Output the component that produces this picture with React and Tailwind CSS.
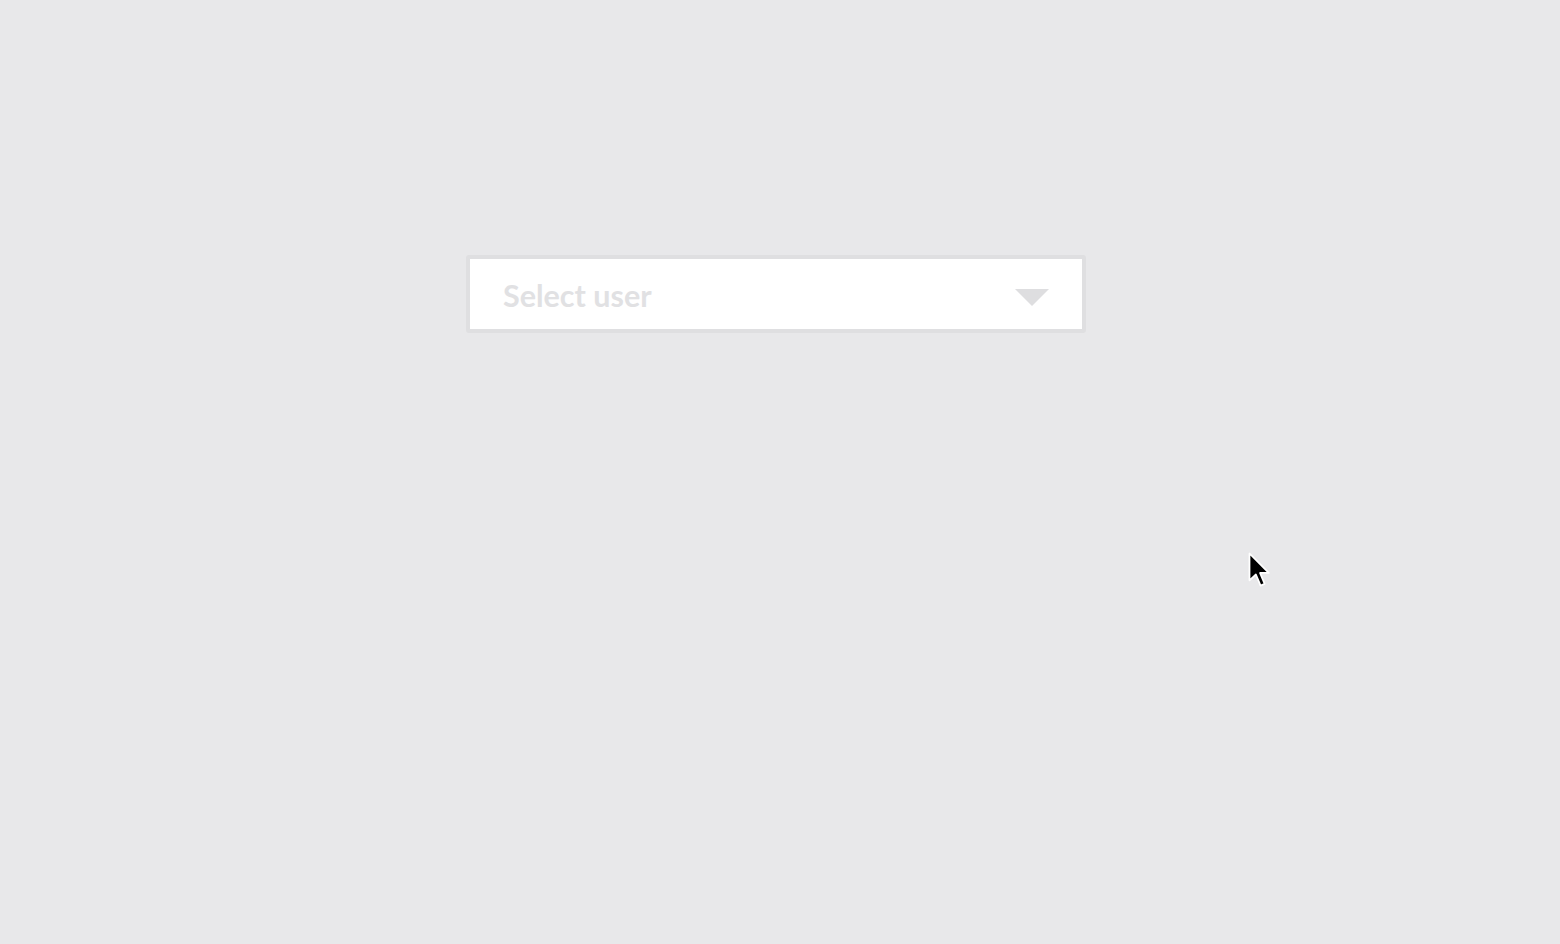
export default function App() {
  return (
    <div className="relative min-h-screen w-full bg-[#e8e8ea] font-['Lato','Noto_Sans',sans-serif]">
      <div className="flex justify-center pt-[255px] pr-[8px]">
        <div className="w-[620px] rounded-[3px] border-4 border-[#dfdfe1] bg-white">
          <div className="flex h-[70px] items-center justify-between pl-[33px] pr-[33px]">
            <span className="mt-[3px] text-[30.5px] font-bold leading-none text-[#e1e1e3]">Select user</span>
            <svg width="34" height="18" viewBox="0 0 34 18" className="mt-[8px]">
              <polygon points="0,0 34,0 17,17" fill="#dedee0" />
            </svg>
          </div>
        </div>
      </div>

      {/* mouse pointer */}
      <svg className="absolute left-[1246px] top-[551px]" width="28" height="40" viewBox="0 0 24 34">
        <path d="M3 2 L3 25 L8.5 20 L12.5 29.5 L16 28 L12 18.7 L19.5 18.7 Z" fill="#000" stroke="#fff" strokeWidth="1.5" strokeLinejoin="round" />
      </svg>
    </div>
  )
}
